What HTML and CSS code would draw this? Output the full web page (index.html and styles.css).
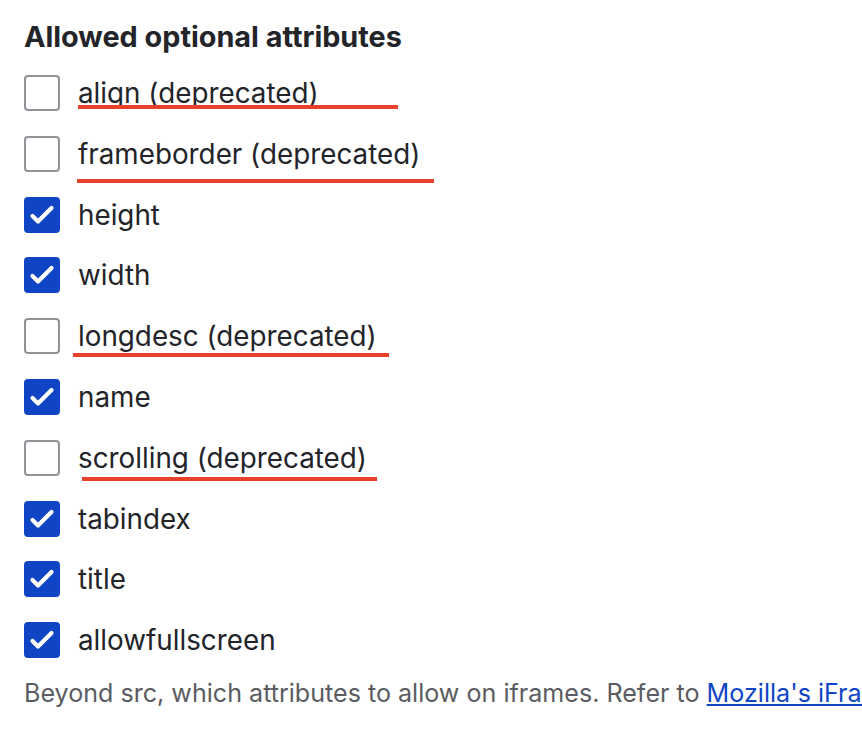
FILE: index.html
```html
<!DOCTYPE html>
<html>
<head>
  <meta charset="UTF-8">
  <title>Allowed optional attributes</title>
  <link rel="stylesheet" href="styles.css">
</head>
<body>
  <div class="attrs">
    <h2 class="attrs-title">Allowed optional attributes</h2>
    <div class="options">
      <label class="option">
        <span class="box"></span>
        <span class="name">align (deprecated)</span>
        <span class="mark mark-align"></span>
      </label>
      <label class="option">
        <span class="box"></span>
        <span class="name">frameborder (deprecated)</span>
        <span class="mark mark-frameborder"></span>
      </label>
      <label class="option">
        <span class="box checked"></span>
        <span class="name">height</span>
      </label>
      <label class="option">
        <span class="box checked"></span>
        <span class="name">width</span>
      </label>
      <label class="option">
        <span class="box"></span>
        <span class="name">longdesc (deprecated)</span>
        <span class="mark mark-longdesc"></span>
      </label>
      <label class="option">
        <span class="box checked"></span>
        <span class="name">name</span>
      </label>
      <label class="option">
        <span class="box"></span>
        <span class="name">scrolling (deprecated)</span>
        <span class="mark mark-scrolling"></span>
      </label>
      <label class="option">
        <span class="box checked"></span>
        <span class="name">tabindex</span>
      </label>
      <label class="option">
        <span class="box checked"></span>
        <span class="name">title</span>
      </label>
      <label class="option">
        <span class="box checked"></span>
        <span class="name">allowfullscreen</span>
      </label>
    </div>
    <p class="help">Beyond src, which attributes to allow on iframes. Refer to <a href="#">Mozilla's iFrame documentation</a></p>
  </div>
</body>
</html>
```

FILE: styles.css
```css
body {
  margin: 0;
  background: #ffffff;
  color: #232429;
  font-family: Inter, "Noto Sans", sans-serif;
  overflow: hidden;
}

.attrs {
  padding: 20px 0 0 24px;
}

.attrs-title {
  margin: 0;
  font-size: 28.8px;
  font-weight: 700;
  line-height: 34px;
  color: #232429;
}

.options {
  display: flex;
  flex-direction: column;
  gap: 24.8px;
  margin-top: 21px;
}

.option {
  position: relative;
  display: flex;
  align-items: center;
  gap: 18px;
  height: 36px;
  font-size: 27.8px;
  white-space: nowrap;
}

/* checkbox */
.box {
  flex: none;
  box-sizing: border-box;
  width: 36px;
  height: 36px;
  border: 2px solid #919297;
  border-radius: 4px;
  background: #ffffff;
}

.box.checked {
  border-color: #0f44c4;
  background: #0f44c4 url("data:image/svg+xml,%3Csvg xmlns='http://www.w3.org/2000/svg' viewBox='0 0 36 36'%3E%3Cpath d='M8.5 19l5.5 5.5L27.5 11' fill='none' stroke='%23ffffff' stroke-width='4.2' stroke-linecap='round' stroke-linejoin='round'/%3E%3C/svg%3E") center / 36px 36px no-repeat;
}

/* red annotation strokes */
.mark {
  position: absolute;
  height: 4px;
  background: #e8412b;
}
.mark-align { left: 54px; width: 320px; top: 30px; }
.mark-frameborder { left: 53px; width: 357px; top: 43px; }
.mark-longdesc { left: 49px; width: 316px; top: 35px; }
.mark-scrolling { left: 58px; width: 295px; top: 37px; }

.help {
  margin: 20px 0 0;
  font-size: 25.1px;
  line-height: 30px;
  color: #5b5c62;
  white-space: nowrap;
}

.help a {
  color: #0f44c4;
}
```
